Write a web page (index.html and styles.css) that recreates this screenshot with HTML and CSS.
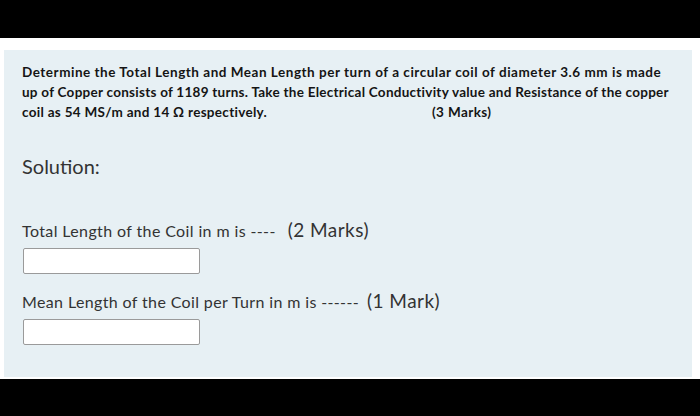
FILE: index.html
```html
<!DOCTYPE html>
<html>
<head>
<meta charset="utf-8">
<link rel="stylesheet" href="styles.css">
</head>
<body>
<div class="topbar"></div>
<div class="sheet">
  <div class="panel">
    <p class="question"><span class="ql1">Determine the Total Length and Mean Length per turn of a circular coil of diameter 3.6 mm is made</span><br><span class="ql2">up of Copper consists of 1189 turns. Take the Electrical Conductivity value and Resistance of the copper</span><br><span class="qline">coil as 54 MS/m and 14 Ω respectively.</span><span class="qmarks">(3 Marks)</span></p>
    <h2 class="solution">Solution:</h2>
    <div class="field field-first">
      <label class="label l1">Total Length of the Coil in m is ----<span class="big gap2">(2 Marks)</span></label>
      <input class="box" type="text">
    </div>
    <div class="field">
      <label class="label l2">Mean Length of the Coil per Turn in m is ------<span class="big gap1">(1 Mark)</span></label>
      <input class="box" type="text">
    </div>
  </div>
</div>
<div class="bottombar"></div>
</body>
</html>
```
FILE: styles.css
```css
html, body {
  margin: 0;
  padding: 0;
  background: #000;
  height: 416px;
  overflow: hidden;
}
.topbar {
  height: 38px;
  background: #000;
}
.sheet {
  background: #fff;
  padding: 12px 8px 2px 4px;
}
.panel {
  background: #e7f0f4;
  height: 327px;
  padding: 0 18px;
  box-sizing: border-box;
  display: flex;
  flex-direction: column;
  font-family: Lato, "Open Sans", sans-serif;
  color: #222;
  overflow: hidden;
}
.question {
  margin: 12px 0 0;
  font-size: 13.5px;
  letter-spacing: 0.4px;
  line-height: 20px;
  font-weight: 700;
  color: #151515;
  white-space: nowrap;
}
.ql1 {
  letter-spacing: 0.52px;
}
.ql2 {
  letter-spacing: 0.26px;
}
.qline {
  display: inline-block;
  width: 410px;
  letter-spacing: 0.3px;
}
.qmarks {
  display: inline-block;
}
.solution {
  margin: 31px 0 0;
  font-size: 20px;
  line-height: 26px;
  font-weight: 400;
  color: #333;
}
.field {
  display: flex;
  flex-direction: column;
  align-items: flex-start;
  margin-top: 16px;
}
.field-first {
  margin-top: 40px;
}
.label {
  font-size: 16px;
  line-height: 22px;
  color: #333;
  white-space: nowrap;
}
.l1 {
  letter-spacing: 0.38px;
}
.l2 {
  letter-spacing: 0.37px;
}
.big {
  font-size: 19px;
  letter-spacing: 0.45px;
}
.gap2 {
  margin-left: 12px;
}
.gap1 {
  margin-left: 8px;
}
.box {
  margin: 6px 0 0 1px;
  width: 177px;
  height: 26px;
  box-sizing: border-box;
  border: 1px solid #9a9a9a;
  border-radius: 2px;
  background: #fff;
  padding: 0;
}
.bottombar {
  background: #000;
  height: 40px;
}
```
